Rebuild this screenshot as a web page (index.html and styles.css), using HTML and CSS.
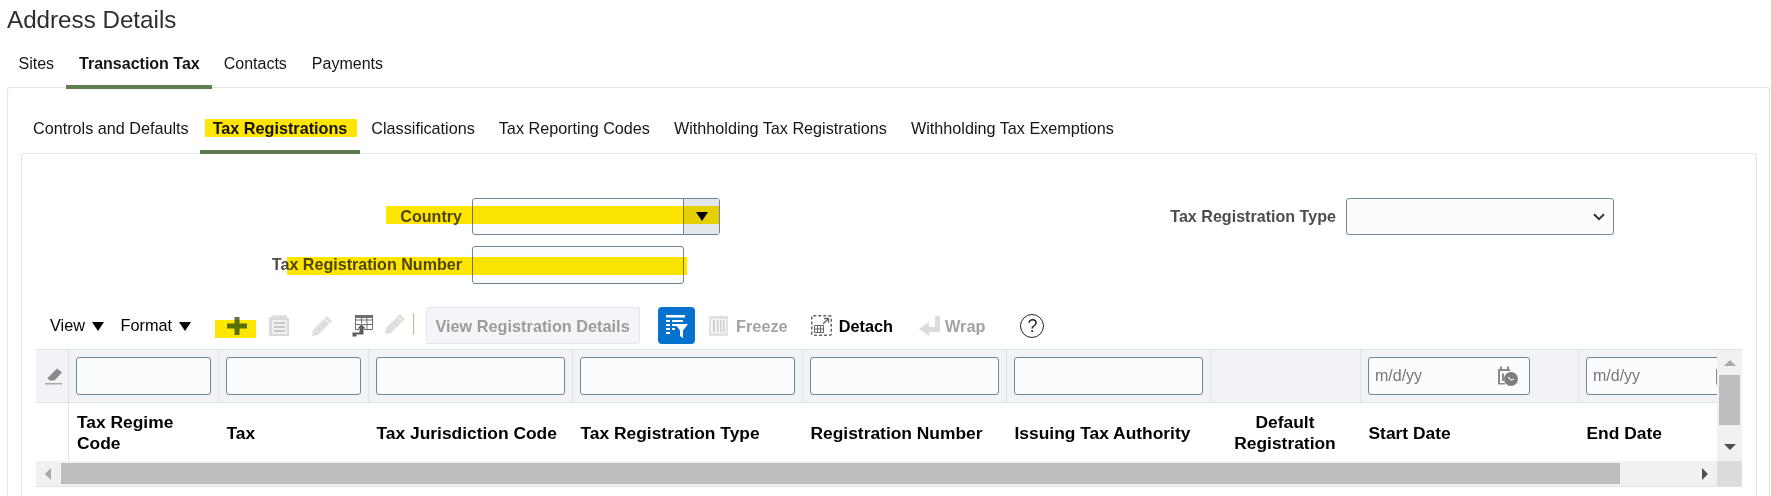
FILE: index.html
```html
<!DOCTYPE html>
<html lang="en">
<head>
<meta charset="utf-8">
<title>Address Details</title>
<link rel="stylesheet" href="styles.css">
</head>
<body>
<div class="page">
  <h1 class="title">Address Details</h1>
  <nav class="tabs">
    <a class="tab">Sites</a>
    <a class="tab active">Transaction Tax</a>
    <a class="tab">Contacts</a>
    <a class="tab">Payments</a>
  </nav>
  <section class="panel">
    <nav class="tabs subtabs">
      <a class="tab">Controls and Defaults</a>
      <a class="tab active"><span class="mark mark-tab"></span>Tax Registrations</a>
      <a class="tab">Classifications</a>
      <a class="tab">Tax Reporting Codes</a>
      <a class="tab">Withholding Tax Registrations</a>
      <a class="tab">Withholding Tax Exemptions</a>
    </nav>
    <section class="inner">
      <form class="form">
        <label class="lbl">Country</label>
        <div class="combo"><span class="combo-text"></span><span class="combo-btn"><i class="tri"></i></span></div>
        <label class="lbl">Tax Registration Type</label>
        <div class="select"><svg class="chev" viewBox="0 0 12 8" width="12" height="8"><path d="M1 1.200 6 6.200 11 1.200" fill="none" stroke="#333" stroke-width="2"/></svg></div>
        <label class="lbl lbl-2">Tax Registration Number</label>
        <div class="field field-num"></div>
        <span class="mark mark-country"></span>
        <span class="mark mark-number"></span>
      </form>

      <div class="toolbar">
        <span class="menu">View <i class="tri"></i></span>
        <span class="menu ml-format">Format <i class="tri"></i></span>
        <span class="plus-wrap"><span class="mark mark-plus"></span>
          <svg width="20" height="18" viewBox="0 0 20 18"><path d="M7.500 0h5v6.500H20v5h-7.500V18h-5v-6.500H0v-5h7.500z" fill="#587a3a"/></svg>
        </span>
        <svg class="ic ml-22" width="20" height="21" viewBox="0 0 20 21"><path d="M3 0h15v2H3z" fill="#e3e3e3"/><path d="M0 2h18v1h2v18H1v-1H0z" fill="#d9d9d9"/><path d="M3 5h15v14H3z" fill="#efefef"/><path d="M5 7h11v2H5zM5 11h11v2H5zM5 15h11v2H5z" fill="#c9c9c9"/></svg>
        <svg class="ic ml-22" width="22" height="22" viewBox="0 0 22 22"><path d="M16 1l5 5L7 20l-6 1 1-6z" fill="#dedede"/><path d="M13.500 3.500l5 5" stroke="#fff" stroke-width="1"/></svg>
        <svg class="ic ml-19" width="21" height="22" viewBox="0 0 21 22"><path d="M3.500 .5h17v14h-17zM3.500 5h17M3.500 9.500h17M9.500 .5v14M15 .5v14" fill="none" stroke="#6e6e6e" stroke-width="1"/><rect x="3" y="0" width="18" height="3" fill="#6e6e6e"/><path d="M0 22v-5h7v-3H4.500l5-5.500 5 5.500H12v6H4v2z" fill="#fff"/><path d="M.5 21.500v-4h7v-4H5.500l4-4.500 4 4.500h-2v6h-7v2z" fill="#5e5e5e"/></svg>
        <svg class="ic ml-11 up-2" width="22" height="22" viewBox="0 0 22 22"><path d="M16 1l5 5L7 20l-6 1 1-6z" fill="#dedede"/><path d="M13.500 3.500l5 5" stroke="#fff" stroke-width="1"/></svg>
        <span class="sep"></span>
        <button class="btn" type="button">View Registration Details</button>
        <span class="filter-btn">
          <svg width="24" height="24" viewBox="0 0 24 24"><path d="M1 1h19v2.500H1zM1 6h4v2H1zM7 6h11v2H7zM1 10h4v2H1zM7 10h6v2H7zM1 14h4v2H1zM1 18h4v2H1zM7 14h3v2H7z" fill="#fff"/><path d="M10 10h13l-5 6.500V24l-3-2v-5.500z" fill="#fff"/></svg>
        </span>
        <svg class="ic ml-14" width="19" height="20" viewBox="0 0 19 20"><rect width="19" height="20" fill="#e2e2e2"/><path d="M2 3h15v14H2z" fill="#f5f5f5"/><path d="M4 4h2v12H4zM8 4h1.500v12H8zM11 4h1.500v12H11zM14 4h1.500v12H14z" fill="#cfcfcf"/></svg>
        <span class="tool-text off ml-8">Freeze</span>
        <svg class="ic ml-23" width="21" height="21" viewBox="0 0 21 21"><rect x=".75" y=".75" width="19.500" height="19.500" rx="1.500" fill="none" stroke="#666" stroke-width="1.500" stroke-dasharray="3 2"/><path d="M12 9l5-5M13 3.500h4.500V8" fill="none" stroke="#666" stroke-width="1.300"/><path d="M3.500 10.500h9v7h-9zM3.500 14h9M6.500 10.500v7M9.500 10.500v7" fill="none" stroke="#666"/></svg>
        <span class="tool-text ml-7">Detach</span>
        <svg class="ic ml-26" width="22" height="20" viewBox="0 0 22 20"><path d="M16 0h5v16H10v4L0 13l10-7v5h6z" fill="#dcdcdc"/></svg>
        <span class="tool-text off ml-4">Wrap</span>
        <span class="help">?</span>
      </div>

      <div class="tbl">
        <div class="viewport">
          <div class="row filter">
            <div class="cell first">
              <svg width="18" height="17" viewBox="0 0 18 17"><path d="M12 .5l5 4-7.500 8H4.500L2.500 10z" fill="#8c8c8c"/><path d="M0 15h17v1.500H0z" fill="#a9a9a9"/></svg>
            </div>
            <div class="cell"><div class="field"></div></div>
            <div class="cell"><div class="field"></div></div>
            <div class="cell"><div class="field"></div></div>
            <div class="cell"><div class="field"></div></div>
            <div class="cell"><div class="field"></div></div>
            <div class="cell"><div class="field"></div></div>
            <div class="cell"></div>
            <div class="cell"><div class="field date"><span>m/d/yy</span>
              <svg width="22" height="20" viewBox="0 0 22 20"><path d="M3 3h11v2H3zM4 .5h2v3H4zM11 .5h2v3h-2zM2 3h2v14h5v1.500H2z" fill="#8a8a8a"/><path d="M6 7.500h2V15H6z" fill="#8a8a8a"/><circle cx="15" cy="13" r="7" fill="#7d7d7d"/><path d="M12 11l3 3 3-1" fill="none" stroke="#e8e8e8" stroke-width="1.200"/></svg></div></div>
            <div class="cell"><div class="field date"><span>m/d/yy</span>
              <svg width="22" height="20" viewBox="0 0 22 20"><path d="M3 3h11v2H3zM4 .5h2v3H4zM11 .5h2v3h-2zM2 3h2v14h5v1.500H2z" fill="#8a8a8a"/><circle cx="15" cy="13" r="7" fill="#7d7d7d"/></svg></div></div>
          </div>
          <div class="row head">
            <div class="hcell first"></div>
            <div class="hcell bordered">Tax Regime<br>Code</div>
            <div class="hcell">Tax</div>
            <div class="hcell">Tax Jurisdiction Code</div>
            <div class="hcell">Tax Registration Type</div>
            <div class="hcell">Registration Number</div>
            <div class="hcell">Issuing Tax Authority</div>
            <div class="hcell center">Default<br>Registration</div>
            <div class="hcell">Start Date</div>
            <div class="hcell">End Date</div>
          </div>
        </div>
        <div class="vbar"><i class="arrow up"></i><span class="vthumb"></span><i class="arrow down"></i></div>
        <div class="hbar"><i class="arrow left"></i><span class="hthumb"></span><i class="arrow right"></i></div>
        <div class="corner"></div>
      </div>
    </section>
  </section>
</div>
</body>
</html>
```

FILE: styles.css
```css
* { box-sizing: border-box; }
html, body { margin: 0; height: 496px; overflow: hidden; background: #fff; }
body { font: 16px/22px "Liberation Sans", Arial, sans-serif; color: #161513; }

.page { height: 496px; display: flex; flex-direction: column; padding: 0 1px 0 7px; }

.title { margin: 0; height: 39px; font-size: 24.2px; font-weight: 400; line-height: 39px; color: #312d2a; }

.tabs { display: flex; height: 50px; margin: 0 0 -2px -1px; padding-top: 13px; position: relative; z-index: 1; }
.tab { position: relative; height: 37px; padding: 1px 12.5px 0; white-space: nowrap; color: #161513; }
.tab.active { font-weight: 700; border-bottom: 4px solid #5f7d4f; }
.tabs:not(.subtabs) .tab.active { padding: 1px 12px 0 13.5px; margin: 0 -0.5px 0 -1px; }

.panel { flex: 1; display: flex; flex-direction: column; min-height: 0; border: 1px solid #dfe4e9; border-bottom: 0; border-radius: 3px 3px 0 0; padding: 29px 12px 0 13px; }

.subtabs { height: 37px; padding: 0; margin: 0 0 -1px 0; font-size: 16.2px; }
.subtabs .tab { padding: 0 12px; }
.subtabs .tab.active { padding: 0 13px; margin: 0 -1px; }

.inner { flex: 1; min-height: 0; border: 1px solid #dfe4e9; border-bottom: 0; border-radius: 3px 3px 0 0; }

.form { position: relative; display: grid; grid-template-columns: 440px 248px 606px 268px; grid-template-rows: 37px 38px; gap: 11px 10px; margin-top: 44px; }
.lbl { padding-bottom: 2px; font-size: 16.100px; font-weight: 700; color: #4f4c4a; text-align: right; align-self: center; white-space: nowrap; }
.lbl-2 { grid-column: 1; }

.field { height: 38px; background: #fbfcfe; border: 1px solid #6f8797; border-radius: 3px; }
.field-num { width: 212px; }

.combo { display: flex; background: #fbfcfe; border: 1px solid #6f8797; border-radius: 3px; }
.combo-text { flex: 1; }
.combo-btn { width: 36px; border-left: 1px solid #6f8797; background: #e4e7ea; display: flex; align-items: center; justify-content: center; }

.select { position: relative; display: flex; align-items: center; justify-content: flex-end; padding-right: 8px; background: #fbfcfe; border: 1px solid #6f8797; border-radius: 3px; }

.tri { display: inline-block; width: 0; height: 0; border-left: 6.500px solid transparent; border-right: 6.500px solid transparent; border-top: 9px solid #000; }

.mark { position: absolute; background: #ffe600; mix-blend-mode: multiply; pointer-events: none; }
.mark-tab { left: 5.500px; right: 3px; top: 2px; height: 18px; }
.mark-country { left: 364px; top: 8px; width: 333px; height: 18px; }
.mark-number { left: 265px; top: 59px; width: 400px; height: 18px; }
.mark-plus { left: -12px; top: 3px; width: 41px; height: 18px; }

.toolbar { display: flex; align-items: center; height: 37px; margin-top: 23px; padding-left: 28px; color: #000; font-size: 16.300px; }
.menu { display: inline-flex; align-items: center; gap: 7px; padding-bottom: 2px; white-space: nowrap; }
.menu .tri { margin-top: 4px; }
.ml-format { margin-left: 16.500px; }
.plus-wrap { position: relative; display: inline-flex; width: 20px; height: 18px; margin-left: 35.500px; }
.ic { display: block; flex: none; }
.ml-4 { margin-left: 4px; }
.ml-7 { margin-left: 7px; }
.ml-8 { margin-left: 8px; }
.ml-11 { margin-left: 11px; }
.ml-14 { margin-left: 14px; }
.ml-19 { margin-left: 19.500px; }
.ml-22 { margin-left: 22px; }
.ml-23 { margin-left: 23px; }
.ml-26 { margin-left: 26px; }
.up-2 { margin-top: -4px; }
.sep { width: 1px; height: 22px; margin: -4px 0 0 7px; background: #b8b79c; }
.btn { width: 214px; height: 37px; margin-left: 11.500px; padding: 0; font: 700 16.300px/22px "Liberation Sans", Arial, sans-serif; color: #9c9c9c; background: #f3f5f8; border: 1px solid #e2e6ea; border-radius: 3px; }
.filter-btn { width: 37px; height: 37px; margin-left: 18.500px; display: flex; align-items: center; justify-content: center; background: #0572ce; border-radius: 4px; flex: none; }
.tool-text { font-weight: 700; color: #000; white-space: nowrap; }
.tool-text.off { color: #a3a3a3; }
.help { width: 24px; height: 24px; margin-left: 35px; border: 1.500px solid #222; border-radius: 50%; display: flex; align-items: center; justify-content: center; font-size: 18px; color: #222; flex: none; }

.tbl { display: grid; grid-template-columns: 1681px 25px; grid-template-rows: 112px 26px; margin: 5px 0 0 14px; width: 1706px; }
.viewport { overflow: hidden; border-top: 1px solid #dfe4e9; }
.row { display: grid; grid-template-columns: 32px 150px 150px 204px 230px 204px 204px 150px 218px 180px; width: 1722px; }
.filter { height: 53px; background: #f1f3f6; border-bottom: 1px solid #dfe4e9; }
.cell { padding: 7px 7px 0 7px; border-left: 1px solid #dfe4e9; }
.cell.first { border-left: 0; padding: 18px 0 0 9px; }
.cell .field { width: 100%; }
.cell .date { display: flex; align-items: center; justify-content: space-between; padding: 0 11px 0 6px; color: #767676; width: 162px; }
.head { height: 58px; background: #fff; font-size: 17.400px; font-weight: 700; color: #000; }
.hcell { display: flex; align-items: center; padding: 2px 0 0 8.500px; line-height: 21px; white-space: nowrap; }
.hcell.first { padding: 0; }
.hcell.bordered { padding-left: 8px; border-left: 1px solid #dfe4e9; }
.hcell.center { justify-content: center; text-align: center; padding: 2px 0 0; }

.vbar { position: relative; background: #f1f1f1; border-top: 1px solid #dfe4e9; display: flex; flex-direction: column; align-items: center; }
.vthumb { width: 21px; height: 50px; margin-top: 9px; background: #bebebe; }
.hbar { position: relative; display: flex; align-items: center; background: #f1f1f1; border-bottom: 1px solid #dfe4e9; }
.hthumb { position: absolute; left: 25px; top: 2px; width: 1559px; height: 21px; background: #bebebe; }
.corner { background: #dcdcdc; border-bottom: 1px solid #dfe4e9; }
.arrow { width: 0; height: 0; display: block; }
.arrow.up { margin-top: 10px; border: 6px solid transparent; border-top: 0; border-bottom: 6px solid #a9a9a9; }
.arrow.down { margin-top: 19px; border: 6px solid transparent; border-bottom: 0; border-top: 6px solid #505050; }
.arrow.left { margin-left: 9px; border: 6px solid transparent; border-left: 0; border-right: 6px solid #a9a9a9; }
.arrow.right { margin-left: auto; margin-right: 9px; border: 6px solid transparent; border-right: 0; border-left: 6px solid #505050; }
```
